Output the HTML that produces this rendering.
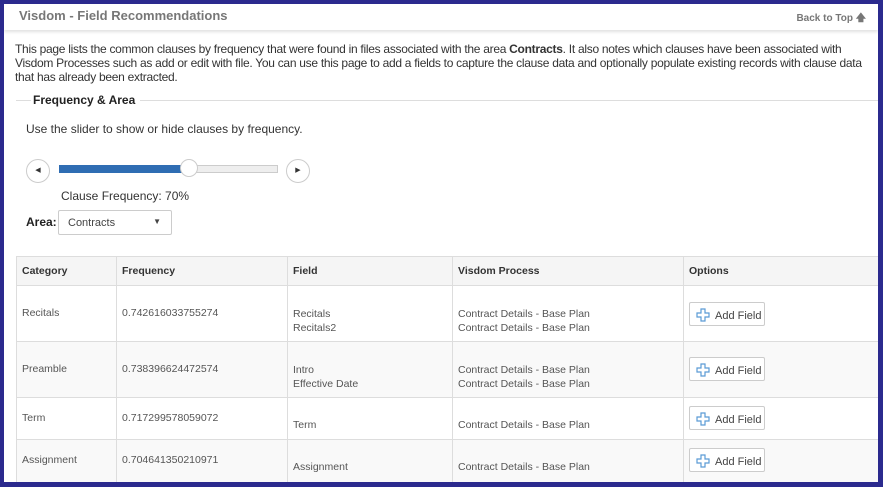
<!DOCTYPE html>
<html><head><meta charset="utf-8"><style>
*{box-sizing:border-box;margin:0;padding:0}
body{width:883px;height:487px;background:#2b2a8e;font-family:"Liberation Sans",sans-serif;position:relative;overflow:hidden}
#page{position:absolute;left:4px;top:4px;width:874px;height:478px;background:#fff;overflow:hidden}
.hdr{position:absolute;left:0;top:0;width:874px;height:26px;background:#fff;box-shadow:0 2px 3px rgba(0,0,0,.12)}
.hdr .t{position:absolute;left:15px;top:4px;font-size:13px;font-weight:bold;color:#777}
.hdr .b{position:absolute;right:12px;top:7px;font-size:10px;font-weight:bold;color:#777}
.intro{position:absolute;left:11px;top:38px;width:860px;font-size:12px;line-height:14px;color:#333;letter-spacing:-0.28px}
.legend{position:absolute;left:12px;top:96px;width:862px;height:1px;background:#ddd}
.legend span{position:absolute;left:15px;top:-7px;background:#fff;padding:0 5px 0 2px;font-size:12px;font-weight:bold;color:#222}
.use{position:absolute;left:22px;top:118px;font-size:12px;color:#333}
.circ{position:absolute;width:24px;height:24px;border:1px solid #ccc;border-radius:50%;font-size:7px;color:#333;text-align:center;line-height:22px}
.track{position:absolute;left:55px;top:161px;width:219px;height:8px;background:#eee;border:1px solid #ccc}
.fill{position:absolute;left:55px;top:161px;width:130px;height:8px;background:#2f6db3}
.knob{position:absolute;left:176px;top:155px;width:18px;height:18px;border-radius:50%;background:#fff;border:1px solid #ccc}
.cf{position:absolute;left:57px;top:185px;font-size:12px;color:#333}
.area{position:absolute;left:22px;top:211px;font-size:12px;font-weight:bold;color:#222}
.sel{position:absolute;left:54px;top:206px;width:114px;height:25px;border:1px solid #ccc;border-radius:2px;font-size:11px;color:#444;padding:6px 0 0 9px}
.sel i{position:absolute;right:10px;top:6px;font-style:normal;font-size:8px}
table{position:absolute;left:12px;top:252px;width:870px;border-collapse:collapse;font-size:10.5px;color:#555}
th{background:#f5f5f5;font-weight:bold;color:#333;text-align:left;height:29px;padding:0 5px;border:1px solid #ddd}
td{border:1px solid #ddd;padding:0 5px;vertical-align:top}
tr.r td{background:#fff}
tr.g td{background:#f9f9f9}
.btn{display:inline-block;width:76px;height:24px;border:1px solid #ccc;border-radius:2px;background:#fff;font-size:11px;color:#444;padding:5px 0 0 6px;position:relative}
.btn svg{vertical-align:-3px;margin-right:5px}
</style></head><body><div id="page">
<div class="hdr"><div class="t">Visdom - Field Recommendations</div><div class="b">Back to Top &#129093;</div></div>
<div class="intro">This page lists the common clauses by frequency that were found in files associated with the area <b>Contracts</b>. It also notes which clauses have been associated with Visdom Processes such as add or edit with file. You can use this page to add a fields to capture the clause data and optionally populate existing records with clause data that has already been extracted.</div>
<div class="legend"><span>Frequency &amp; Area</span></div>
<div class="use">Use the slider to show or hide clauses by frequency.</div>
<div class="circ" style="left:22px;top:155px">&#9664;</div>
<div class="track"></div><div class="fill"></div><div class="knob"></div>
<div class="circ" style="left:282px;top:155px">&#9654;</div>
<div class="cf">Clause Frequency: 70%</div>
<div class="area">Area:</div>
<div class="sel">Contracts<i>&#9660;</i></div>
<table>
<tr><th style="width:100px">Category</th><th style="width:171px">Frequency</th><th style="width:165px">Field</th><th style="width:231px">Visdom Process</th><th>Options</th></tr>
<tr class="r" style="height:56px"><td style="padding-top:21px">Recitals</td><td style="padding-top:21px">0.742616033755274</td><td style="padding-top:21px;line-height:14px">Recitals<br>Recitals2</td><td style="padding-top:21px;line-height:14px">Contract Details - Base Plan<br>Contract Details - Base Plan</td><td style="padding-top:16px"><span class="btn"><svg width="14" height="14" viewBox="0 0 14 14"><path d="M5 1h4v4h4v4h-4v4h-4v-4h-4v-4h4z" fill="none" stroke="#5b9bd5" stroke-width="1.2"/></svg>Add Field</span></td></tr>
<tr class="g" style="height:56px"><td style="padding-top:21px">Preamble</td><td style="padding-top:21px">0.738396624472574</td><td style="padding-top:21px;line-height:14px">Intro<br>Effective Date</td><td style="padding-top:21px;line-height:14px">Contract Details - Base Plan<br>Contract Details - Base Plan</td><td style="padding-top:15px"><span class="btn"><svg width="14" height="14" viewBox="0 0 14 14"><path d="M5 1h4v4h4v4h-4v4h-4v-4h-4v-4h4z" fill="none" stroke="#5b9bd5" stroke-width="1.2"/></svg>Add Field</span></td></tr>
<tr class="r" style="height:42px"><td style="padding-top:14px">Term</td><td style="padding-top:14px">0.717299578059072</td><td style="padding-top:21px">Term</td><td style="padding-top:21px">Contract Details - Base Plan</td><td style="padding-top:8px"><span class="btn"><svg width="14" height="14" viewBox="0 0 14 14"><path d="M5 1h4v4h4v4h-4v4h-4v-4h-4v-4h4z" fill="none" stroke="#5b9bd5" stroke-width="1.2"/></svg>Add Field</span></td></tr>
<tr class="g" style="height:44px"><td style="padding-top:14px">Assignment</td><td style="padding-top:14px">0.704641350210971</td><td style="padding-top:21px">Assignment</td><td style="padding-top:21px">Contract Details - Base Plan</td><td style="padding-top:8px"><span class="btn"><svg width="14" height="14" viewBox="0 0 14 14"><path d="M5 1h4v4h4v4h-4v4h-4v-4h-4v-4h4z" fill="none" stroke="#5b9bd5" stroke-width="1.2"/></svg>Add Field</span></td></tr>
</table>
</div></body></html>
